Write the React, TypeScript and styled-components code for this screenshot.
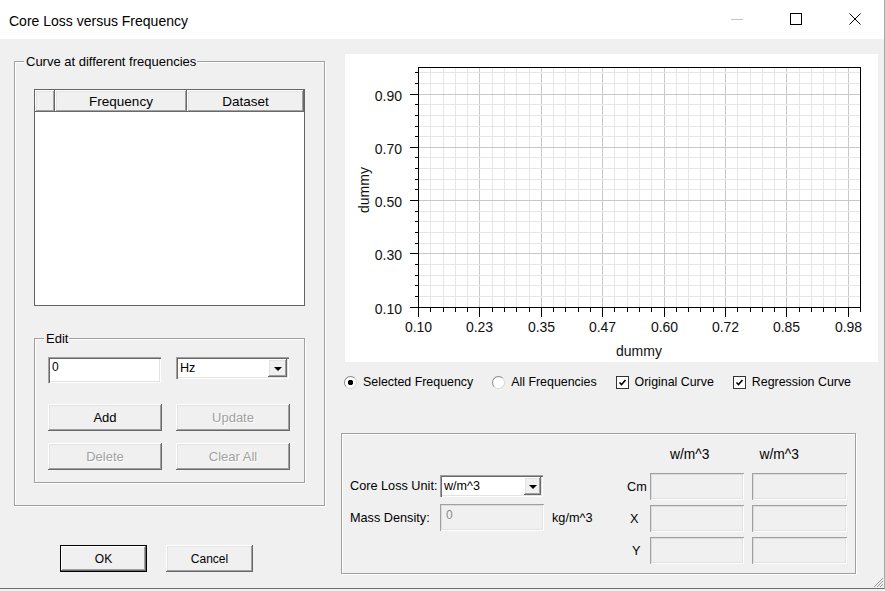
import styled, { createGlobalStyle, css } from 'styled-components'

const GlobalStyle = createGlobalStyle`
  html, body {
    margin: 0;
    padding: 0;
    background: #f0f0f0;
  }
  body {
    font-family: "Liberation Sans", Arial, sans-serif;
    color: #000;
  }
`

// classic win32 3D edges
const sunken = css`
  box-shadow: inset 1px 1px 0 #a0a0a0, inset 2px 2px 0 #696969,
    inset -1px -1px 0 #ffffff, inset -2px -2px 0 #e3e3e3;
`
const raised = css`
  box-shadow: inset -1px -1px 0 #696969, inset 1px 1px 0 #ffffff,
    inset -2px -2px 0 #a0a0a0, inset 2px 2px 0 #e3e3e3;
`
const etched = css`
  border: 1px solid #a0a0a0;
  box-shadow: 1px 1px 0 #ffffff, inset 1px 1px 0 #ffffff;
`

const X_LABELS = ['0.10', '0.23', '0.35', '0.47', '0.60', '0.72', '0.85', '0.98']
const Y_LABELS = ['0.10', '0.30', '0.50', '0.70', '0.90']

const PLOT = { left: 73, top: 13, width: 442, height: 239.5 }
const X_STEPS = 36 // 0.025 per step over 0.1..1.0
const Y_STEP_PX = PLOT.height / 22.5 // 0.04 per step over 0.1..1.0

const px = (v: number) => Math.round(v) + 0.5

const Chart = () => {
  const right = PLOT.left + PLOT.width
  const bottom = PLOT.top + PLOT.height
  const xs = Array.from({ length: X_STEPS + 1 }, (_, i) => px(PLOT.left + (i * PLOT.width) / X_STEPS))
  const ys = Array.from({ length: 23 }, (_, j) => px(bottom - j * Y_STEP_PX))

  return (
    <svg width="533" height="308" viewBox="0 0 533 308" shapeRendering="crispEdges">
      {xs.slice(1, -1).map((x, i) => (
        <line key={'gx' + i} x1={x} x2={x} y1={PLOT.top} y2={bottom} stroke={(i + 1) % 5 === 0 ? '#c8c8c8' : '#e6e6e6'} />
      ))}
      {ys.slice(1).map((y, j) => (
        <line key={'gy' + j} x1={PLOT.left} x2={right} y1={y} y2={y} stroke={(j + 1) % 5 === 0 ? '#c8c8c8' : '#e6e6e6'} />
      ))}
      <rect x={px(PLOT.left)} y={px(PLOT.top)} width={Math.round(PLOT.width)} height={Math.round(PLOT.height)} fill="none" stroke="#000" />

      {ys.map((y, j) => (
        <line key={'ty' + j} x1={px(PLOT.left) - (j % 5 === 0 ? 9 : 4)} x2={px(PLOT.left)} y1={y} y2={y} stroke="#000" />
      ))}
      {xs.map((x, i) => (
        <line key={'tx' + i} x1={x} x2={x} y1={px(bottom)} y2={px(bottom) + (i % 5 === 0 ? 9 : 4)} stroke="#000" />
      ))}

      <g fontFamily='"Liberation Sans", Arial, sans-serif' fontSize="14" fill="#111">
        {Y_LABELS.map((t, k) => (
          <text key={t} x="57" y={ys[k * 5] + 1} textAnchor="end" dominantBaseline="central">
            {t}
          </text>
        ))}
        {X_LABELS.map((t, k) => (
          <text key={t} x={xs[k * 5]} y="273" textAnchor="middle" dominantBaseline="central">
            {t}
          </text>
        ))}
        <text x={PLOT.left + PLOT.width / 2} y="297" textAnchor="middle" dominantBaseline="central">
          dummy
        </text>
        <text x="19" y="136" textAnchor="middle" dominantBaseline="central" transform="rotate(-90 19 136)">
          dummy
        </text>
      </g>
    </svg>
  )
}

const App = () => {
  return (
    <>
      <GlobalStyle />
      <Window>
        <TitleBar>
          <Title>Core Loss versus Frequency</Title>
          <Controls>
            <ControlButton>
              <svg width="12" height="12" viewBox="0 0 12 12" shapeRendering="crispEdges">
                <line x1="0" x2="12" y1="6.5" y2="6.5" stroke="#c4c4c4" />
              </svg>
            </ControlButton>
            <ControlButton>
              <svg width="12" height="12" viewBox="0 0 12 12" shapeRendering="crispEdges">
                <rect x="0.5" y="0.5" width="11" height="11" fill="none" stroke="#000" />
              </svg>
            </ControlButton>
            <ControlButton>
              <svg width="12" height="12" viewBox="0 0 12 12">
                <path d="M0.5 0.5 L11.5 11.5 M11.5 0.5 L0.5 11.5" stroke="#000" strokeWidth="1" />
              </svg>
            </ControlButton>
          </Controls>
        </TitleBar>

        <Client>
          <LeftColumn>
            <GroupBox $height={445} $padding="27px 19px 0 19px">
              <Legend>Curve at different frequencies</Legend>
              <ListView>
                <ListHeader>
                  <HeaderCell $width={20} />
                  <HeaderCell $width={132}>Frequency</HeaderCell>
                  <HeaderCell $width={117}>Dataset</HeaderCell>
                </ListHeader>
              </ListView>

              <GroupBox $height={145} $padding="18px 0 0 13px" $top={32}>
                <Legend>Edit</Legend>
                <EditGrid>
                  <TextBox>0</TextBox>
                  <Combo $width={113} $height={22}>
                    <ComboText>Hz</ComboText>
                    <DropButton $width={19}>
                      <Arrow />
                    </DropButton>
                  </Combo>
                </EditGrid>
                <ButtonGrid>
                  <PushButton $width={114} $size={13}>Add</PushButton>
                  <PushButton $width={114} $size={13} disabled>Update</PushButton>
                  <PushButton $width={114} $size={13} disabled>Delete</PushButton>
                  <PushButton $width={114} $size={13} disabled>Clear All</PushButton>
                </ButtonGrid>
              </GroupBox>
            </GroupBox>

            <DialogButtons>
              <PushButton $width={87} $size={12} $default>OK</PushButton>
              <PushButton $width={87} $size={12}>Cancel</PushButton>
            </DialogButtons>
          </LeftColumn>

          <RightColumn>
            <ChartPanel>
              <Chart />
            </ChartPanel>

            <OptionsRow>
              <Option>
                <Radio $checked />
                Selected Frequency
              </Option>
              <Option>
                <Radio />
                All Frequencies
              </Option>
              <Option>
                <CheckBox>
                  <CheckMark />
                </CheckBox>
                Original Curve
              </Option>
              <Option>
                <CheckBox>
                  <CheckMark />
                </CheckBox>
                Regression Curve
              </Option>
            </OptionsRow>

            <ResultsGroup>
              <UnitForm>
                <FormLabel>Core Loss Unit:</FormLabel>
                <Combo $width={103} $height={22}>
                  <ComboText>w/m^3</ComboText>
                  <DropButton $width={17}>
                    <Arrow />
                  </DropButton>
                </Combo>
                <span />
                <FormLabel>Mass Density:</FormLabel>
                <ValueBox $width={104}>0</ValueBox>
                <FormLabel $pad={8}>kg/m^3</FormLabel>
              </UnitForm>

              <Coefficients>
                <CoefHeader>
                  <UnitHeading $offset={43}>w/m^3</UnitHeading>
                  <UnitHeading $offset={50}>w/m^3</UnitHeading>
                </CoefHeader>
                <CoefRow>
                  <CoefLabel $indent={0}>Cm</CoefLabel>
                  <ValueBox $width={94} />
                  <ValueBox $width={95} $gap={8} />
                </CoefRow>
                <CoefRow>
                  <CoefLabel $indent={3}>X</CoefLabel>
                  <ValueBox $width={94} />
                  <ValueBox $width={95} $gap={8} />
                </CoefRow>
                <CoefRow>
                  <CoefLabel $indent={5}>Y</CoefLabel>
                  <ValueBox $width={94} />
                  <ValueBox $width={95} $gap={8} />
                </CoefRow>
              </Coefficients>
            </ResultsGroup>
          </RightColumn>
        </Client>

        <SizeGrip width="12" height="12" viewBox="0 0 12 12">
          <path d="M11 2 L2 11 M11 5 L5 11 M11 8 L8 11" stroke="#9a9a9a" strokeWidth="1" />
        </SizeGrip>
      </Window>
    </>
  )
}

const Window = styled.div`
  position: relative;
  width: 885px;
  height: 589px;
  box-sizing: border-box;
  border-right: 1px solid #a8a8a8;
  border-bottom: 1px solid #6f6f6f;
  background: #f0f0f0;
  display: flex;
  flex-direction: column;
  overflow: hidden;
`

const TitleBar = styled.div`
  flex: none;
  height: 39px;
  background: #ffffff;
  display: flex;
  align-items: center;
`

const Title = styled.div`
  flex: 1;
  padding: 2px 0 0 9px;
  font-size: 14px;
  color: #000;
`

const Controls = styled.div`
  display: flex;
  height: 100%;
`

const ControlButton = styled.div`
  width: 59px;
  height: 100%;
  display: flex;
  align-items: center;
  justify-content: center;
  padding-bottom: 1px;
  box-sizing: border-box;
`

const Client = styled.div`
  flex: 1;
  display: flex;
  padding-left: 14px;
`

const LeftColumn = styled.div`
  width: 311px;
  display: flex;
  flex-direction: column;
  padding-top: 22px;
`

const GroupBox = styled.div<{ $height: number; $padding: string; $top?: number }>`
  position: relative;
  height: ${(p) => p.$height}px;
  margin-top: ${(p) => p.$top ?? 0}px;
  padding: ${(p) => p.$padding};
  box-sizing: border-box;
  ${etched}
`

const Legend = styled.span`
  position: absolute;
  top: -8px;
  left: 9px;
  padding: 0 1px 0 2px;
  background: #f0f0f0;
  font-size: 13px;
  line-height: 15px;
`

const ListView = styled.div`
  height: 215px;
  border: 1px solid #646464;
  background: #ffffff;
`

const ListHeader = styled.div`
  display: flex;
  height: 22px;
`

const HeaderCell = styled.div<{ $width: number }>`
  width: ${(p) => p.$width}px;
  flex: none;
  display: flex;
  align-items: center;
  justify-content: center;
  background: #f0f0f0;
  font-size: 13.5px;
  ${raised}
`

const EditGrid = styled.div`
  display: grid;
  grid-template-columns: 113px 113px;
  column-gap: 15px;
  align-items: start;
`

const TextBox = styled.div`
  height: 26px;
  box-sizing: border-box;
  padding: 3px 0 0 4px;
  background: #ffffff;
  font-size: 12px;
  ${sunken}
`

const Combo = styled.div<{ $width: number; $height: number }>`
  width: ${(p) => p.$width}px;
  height: ${(p) => p.$height}px;
  box-sizing: border-box;
  padding: 2px;
  display: flex;
  background: #ffffff;
  ${sunken}
`

const ComboText = styled.div`
  flex: 1;
  padding: 2px 0 0 2px;
  font-size: 12.6px;
`

const DropButton = styled.div<{ $width: number }>`
  width: ${(p) => p.$width}px;
  display: flex;
  align-items: center;
  justify-content: center;
  background: #f0f0f0;
  ${raised}
`

const Arrow = styled.div`
  width: 0;
  height: 0;
  border-left: 4px solid transparent;
  border-right: 4px solid transparent;
  border-top: 4px solid #000;
  margin-top: 1px;
`

const ButtonGrid = styled.div`
  display: grid;
  grid-template-columns: 114px 114px;
  column-gap: 14px;
  row-gap: 12px;
  margin-top: 21px;
`

const PushButton = styled.button<{ $width: number; $size: number; $default?: boolean }>`
  width: ${(p) => p.$width}px;
  height: 27px;
  padding: 0;
  border: none;
  background: #f0f0f0;
  font-family: "Liberation Sans", Arial, sans-serif;
  font-size: ${(p) => p.$size}px;
  color: #000;
  ${raised}
  ${(p) =>
    p.$default &&
    css`
      box-shadow: inset 0 0 0 1px #000, inset -2px -2px 0 #696969, inset 2px 2px 0 #ffffff,
        inset -3px -3px 0 #a0a0a0;
    `}

  &:disabled {
    color: #a0a0a0;
    text-shadow: 1px 1px 0 #ffffff;
  }
`

const DialogButtons = styled.div`
  display: flex;
  gap: 19px;
  margin-top: 39px;
  padding-left: 46px;
`

const RightColumn = styled.div`
  display: flex;
  flex-direction: column;
  margin-left: 16px;
  padding-top: 15px;
`

const ChartPanel = styled.div`
  width: 533px;
  height: 308px;
  margin-left: 4px;
  background: #ffffff;
  svg {
    display: block;
  }
`

const OptionsRow = styled.div`
  display: flex;
  align-items: center;
  gap: 19px;
  height: 14px;
  margin-top: 13px;
  padding-left: 3px;
`

const Option = styled.label`
  display: flex;
  align-items: center;
  gap: 6px;
  font-size: 12.4px;
  white-space: nowrap;
`

const Radio = styled.span<{ $checked?: boolean }>`
  width: 13px;
  height: 13px;
  flex: none;
  box-sizing: border-box;
  border-radius: 50%;
  border: 1px solid #8c8c8c;
  border-right-color: #d8d8d8;
  border-bottom-color: #d8d8d8;
  background: ${(p) =>
    p.$checked ? 'radial-gradient(circle, #000 0 2.5px, #fff 3px)' : '#ffffff'};
`

const CheckBox = styled.span`
  width: 13px;
  height: 13px;
  flex: none;
  box-sizing: border-box;
  border: 1px solid #333333;
  background: #ffffff;
  display: flex;
  align-items: center;
  justify-content: center;
`

const CheckMark = () => (
  <svg width="9" height="9" viewBox="0 0 9 9">
    <path d="M1.5 4.5 L3.5 6.5 L7.5 2" fill="none" stroke="#000" strokeWidth="1.6" />
  </svg>
)

const ResultsGroup = styled.div`
  width: 515px;
  height: 141px;
  margin-top: 44px;
  box-sizing: border-box;
  display: flex;
  align-items: flex-start;
  padding: 0 8px 0 8px;
  ${etched}
`

const UnitForm = styled.div`
  display: grid;
  grid-template-columns: 90px 104px auto;
  row-gap: 7px;
  align-items: center;
  margin-top: 41px;
`

const FormLabel = styled.span<{ $pad?: number }>`
  font-size: 12.7px;
  padding-left: ${(p) => p.$pad ?? 0}px;
  white-space: nowrap;
`

const ValueBox = styled.div<{ $width: number; $gap?: number }>`
  width: ${(p) => p.$width}px;
  height: 27px;
  flex: none;
  margin-left: ${(p) => p.$gap ?? 0}px;
  box-sizing: border-box;
  padding: 4px 0 0 6px;
  background: #f0f0f0;
  color: #8a8a8a;
  font-size: 12px;
  box-shadow: inset 1px 1px 0 #a0a0a0, inset -1px -1px 0 #ffffff, inset 2px 2px 0 #dcdcdc,
    inset -2px -2px 0 #e3e3e3;
`

const Coefficients = styled.div`
  margin-left: auto;
  margin-top: 12px;
  display: flex;
  flex-direction: column;
  gap: 5px;
`

const CoefHeader = styled.div`
  display: flex;
  height: 16px;
  align-items: center;
  margin-bottom: 6px;
`

const UnitHeading = styled.span<{ $offset: number }>`
  margin-left: ${(p) => p.$offset}px;
  font-size: 13.8px;
`

const CoefRow = styled.div`
  display: flex;
  align-items: center;
`

const CoefLabel = styled.span<{ $indent: number }>`
  width: ${(p) => 23 - p.$indent}px;
  padding-left: ${(p) => p.$indent}px;
  font-size: 12.7px;
`

const SizeGrip = styled.svg`
  position: absolute;
  right: 0;
  bottom: 0;
`

export default App
